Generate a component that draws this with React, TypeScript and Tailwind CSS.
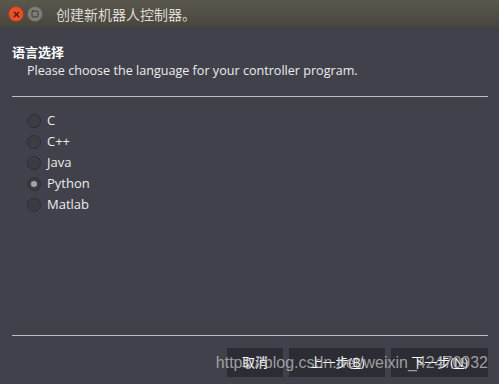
import { X, Square } from 'lucide-react';

const languages = ['C', 'C++', 'Java', 'Python', 'Matlab'];

const Radio = ({ label, checked }: { label: string; checked?: boolean }) => (
  <div className="flex items-center h-[21px]">
    <span className="w-[14px] h-[14px] rounded-full bg-[#3c3c45] border border-[#2e2e36] flex items-center justify-center">
      {checked && <span className="w-[6px] h-[6px] rounded-full bg-[#a4a4a8]" />}
    </span>
    <span className="ml-[6px] text-[13px] text-[#ececec]">{label}</span>
  </div>
);

const App = () => {
  return (
    <div
      className="relative w-[499px] h-[384px] bg-[#41414b] flex flex-col overflow-hidden"
      style={{ fontFamily: '"Open Sans", "Noto Sans CJK SC", sans-serif' }}
    >
      <div className="h-[28px] shrink-0 bg-gradient-to-b from-[#5a574d] to-[#47453e] flex items-center pl-[8px]">
        <span className="w-[16px] h-[16px] rounded-full bg-[#e6502a] border border-[#a8391c] flex items-center justify-center">
          <X className="w-[9px] h-[9px] text-[#3a1a10]" strokeWidth={3} />
        </span>
        <span className="ml-[3px] w-[16px] h-[16px] rounded-full bg-[#7f7e79] border border-[#5d5c57] flex items-center justify-center">
          <Square className="w-[8px] h-[8px] text-[#3c3b37]" strokeWidth={3} />
        </span>
        <span className="ml-[13px] text-[14px] text-[#dfdbd2]">创建新机器人控制器。</span>
      </div>

      <div className="flex-1 flex flex-col pl-[12px] pr-[11px]">
        <div className="mt-[15px] text-[13px] font-bold text-white leading-[18px]">语言选择</div>
        <div className="mt-[1px] pl-[15px] text-[12.6px] text-[#ececec] leading-[18px]">
          Please choose the language for your controller program.
        </div>
        <div className="mt-[16px] h-px bg-[#bebebe]" />
        <div className="mt-[13px] pl-[15px] flex flex-col">
          {languages.map((l) => (
            <Radio key={l} label={l} checked={l === 'Python'} />
          ))}
        </div>
        <div className="flex-1" />
        <div className="h-px bg-[#bebebe]" />
        <div className="mt-[12px] mb-[7px] flex justify-end gap-[6px]">
          <button className="w-[56px] h-[29px] bg-[#2c2c34] text-[13px] text-white">取消</button>
          <button className="w-[96px] h-[29px] bg-[#2c2c34] text-[13px] text-white">
            上一步(<span className="underline">B</span>)
          </button>
          <button className="w-[97px] h-[29px] bg-[#2c2c34] text-[13px] text-white">
            下一步(<span className="underline">N</span>)
          </button>
        </div>
      </div>

      <div
        className="absolute right-[11px] top-[351px] text-[16px] text-[#bdbdbd]/80 pointer-events-none"
        style={{ fontFamily: '"Liberation Sans", sans-serif' }}
      >
        https://blog.csdn.net/weixin_42470932
      </div>
    </div>
  );
};

export default App;
